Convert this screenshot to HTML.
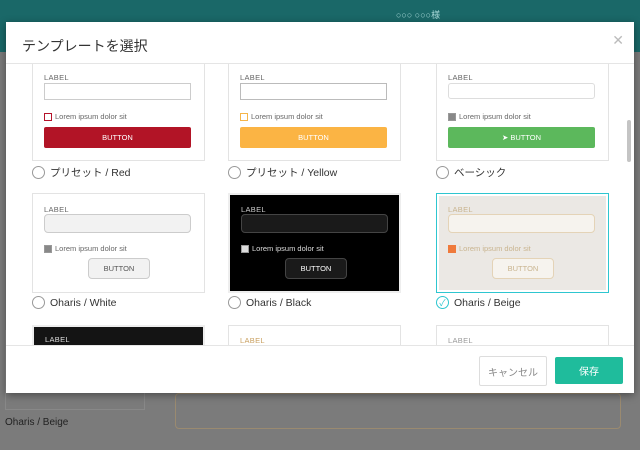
<!DOCTYPE html>
<html><head><meta charset="utf-8"><style>
*{box-sizing:border-box;margin:0;padding:0}
body{width:640px;height:450px;overflow:hidden;background:#7b7b7b;font-family:"Liberation Sans","Noto Sans CJK JP",sans-serif;position:relative}
.abs{position:absolute}
.top{left:0;top:0;width:640px;height:52px;background:#1a6868}
.modal{left:6px;top:22px;width:628px;height:371px;background:#fff;box-shadow:0 2px 8px rgba(0,0,0,.4)}
.title{left:16px;top:14px;font-size:14px;color:#333}
.close{right:10px;top:10px;font-size:14px;color:#bbb}
.hline{left:0;top:41px;width:628px;height:1px;background:#e5e5e5}
.body{left:0;top:42px;width:628px;height:281px;overflow:hidden}
.fline{left:0;top:323px;width:628px;height:1px;background:#e5e5e5}
.card{position:absolute;border:1px solid #e3e3e3;background:#fff;width:173px}
.lab{position:absolute;left:11px;font-size:7.5px;color:#666;letter-spacing:.3px}
.inp{position:absolute;left:11px;width:147px;height:17px;border:1px solid #ccc;background:#fff}
.chk{position:absolute;left:11px;font-size:7.5px;color:#666;display:flex;align-items:center;gap:3px}
.cb{width:8px;height:8px;border:1px solid #999;background:#888;display:inline-block}
.btn{position:absolute;font-size:7.5px;color:#fff;display:flex;align-items:center;justify-content:center}
.rad{position:absolute;display:flex;align-items:center;gap:5px;font-size:10.5px;color:#333}
.rc{width:13px;height:13px;border:1px solid #999;border-radius:50%;background:#fff}
</style></head><body>
<div class="abs top"><span class="abs" style="left:396px;top:8px;font-size:9px;color:#aadada">○○○ ○○○様</span></div>
<div class="abs" style="left:5px;top:330px;width:140px;height:80px;border:1px solid #888"></div>
<div class="abs" style="left:5px;top:417px;font-size:10px;color:#222">Oharis / Beige</div>
<div class="abs" style="left:175px;top:393px;width:446px;height:36px;border:1px solid #9a8a70;border-radius:4px"></div>
<div class="abs modal">
 <div class="abs title">テンプレートを選択</div>
 <div class="abs close">✕</div>
 <div class="abs hline"></div>
 <div class="abs body">
  <div class="card" style="left:26px;top:-10px;height:107px">
   <div class="lab" style="top:18px">LABEL</div>
   <div class="inp" style="top:28px"></div>
   <div class="chk" style="top:57px"><span class="cb" style="background:#fff;border-color:#b5122a"></span>Lorem ipsum dolor sit</div>
   <div class="btn" style="left:11px;top:72px;width:147px;height:21px;background:#b21426;border-radius:2px">BUTTON</div>
  </div>
  <div class="card" style="left:222px;top:-10px;height:107px">
   <div class="lab" style="top:18px">LABEL</div>
   <div class="inp" style="top:28px;border-color:#bbb"></div>
   <div class="chk" style="top:57px"><span class="cb" style="background:#fff;border-color:#f5b54a"></span>Lorem ipsum dolor sit</div>
   <div class="btn" style="left:11px;top:72px;width:147px;height:21px;background:#fbb444;border-radius:2px">BUTTON</div>
  </div>
  <div class="card" style="left:430px;top:-10px;height:107px">
   <div class="lab" style="top:18px">LABEL</div>
   <div class="inp" style="top:28px;border-color:#ddd;border-radius:3px;height:16px"></div>
   <div class="chk" style="top:57px"><span class="cb"></span>Lorem ipsum dolor sit</div>
   <div class="btn" style="left:11px;top:72px;width:147px;height:21px;background:#5cb85c;border-radius:2px">➤ BUTTON</div>
  </div>
  <div class="rad" style="left:26px;top:101px"><span class="rc"></span>プリセット / Red</div>
  <div class="rad" style="left:222px;top:101px"><span class="rc"></span>プリセット / Yellow</div>
  <div class="rad" style="left:430px;top:101px"><span class="rc"></span>ベーシック</div>
  <div class="card" style="left:26px;top:129px;height:100px">
   <div class="lab" style="top:11px">LABEL</div>
   <div class="inp" style="top:20px;height:19px;background:#f2f2f2;border-radius:4px"></div>
   <div class="chk" style="top:50px"><span class="cb"></span>Lorem ipsum dolor sit</div>
   <div class="btn" style="left:55px;top:64px;width:62px;height:21px;background:#f2f2f2;border:1px solid #ccc;border-radius:4px;color:#555">BUTTON</div>
  </div>
  <div class="card" style="left:222px;top:129px;height:100px;background:#000;border:2px solid #eee">
   <div class="lab" style="top:10px;color:#ccc">LABEL</div>
   <div class="inp" style="top:19px;height:19px;background:#1a1a1a;border:1px solid #444;border-radius:4px"></div>
   <div class="chk" style="top:49px;color:#ddd"><span class="cb" style="background:#ddd"></span>Lorem ipsum dolor sit</div>
   <div class="btn" style="left:55px;top:63px;width:62px;height:21px;background:#1a1a1a;border:1px solid #444;border-radius:4px">BUTTON</div>
  </div>
  <div class="card" style="left:430px;top:129px;height:100px;background:#ebe8e4;border:1px solid #2ec6d0;box-shadow:inset 0 0 0 2px #fff">
   <div class="lab" style="top:11px;color:#c9b48f">LABEL</div>
   <div class="inp" style="top:20px;height:19px;background:#f6f3ee;border-color:#e4d3b7;border-radius:4px"></div>
   <div class="chk" style="top:50px;color:#c9b48f"><span class="cb" style="background:#ef7a3c;border-color:#ef7a3c"></span>Lorem ipsum dolor sit</div>
   <div class="btn" style="left:55px;top:64px;width:62px;height:21px;background:#f6f3ee;border:1px solid #e4d3b7;border-radius:4px;color:#c9b48f">BUTTON</div>
  </div>
  <div class="rad" style="left:26px;top:232px"><span class="rc"></span>Oharis / White</div>
  <div class="rad" style="left:222px;top:232px"><span class="rc"></span>Oharis / Black</div>
  <div class="rad" style="left:430px;top:232px"><span class="rc" style="border-color:#2ec6d0;color:#2ec6d0;font-size:9px;display:flex;align-items:center;justify-content:center">✓</span>Oharis / Beige</div>
  <div class="card" style="left:26px;top:261px;height:40px;background:#141414;border:2px solid #eee"><div class="lab" style="top:8px;color:#ddd">LABEL</div></div>
  <div class="card" style="left:222px;top:261px;height:40px"><div class="lab" style="top:10px;color:#c9a060">LABEL</div></div>
  <div class="card" style="left:430px;top:261px;height:40px"><div class="lab" style="top:10px;color:#999">LABEL</div></div>
  <div class="abs" style="left:621px;top:56px;width:4px;height:42px;background:#c4c4c4;border-radius:2px"></div>
 </div>
 <div class="abs fline"></div>
 <div class="abs" style="left:473px;top:334px;width:68px;height:30px;border:1px solid #ddd;border-radius:2px;font-size:10px;color:#888;display:flex;align-items:center;justify-content:center">キャンセル</div>
 <div class="abs" style="left:549px;top:335px;width:68px;height:27px;background:#1fbc9c;border-radius:2px;font-size:10px;color:#fff;display:flex;align-items:center;justify-content:center">保存</div>
</div>
</body></html>
